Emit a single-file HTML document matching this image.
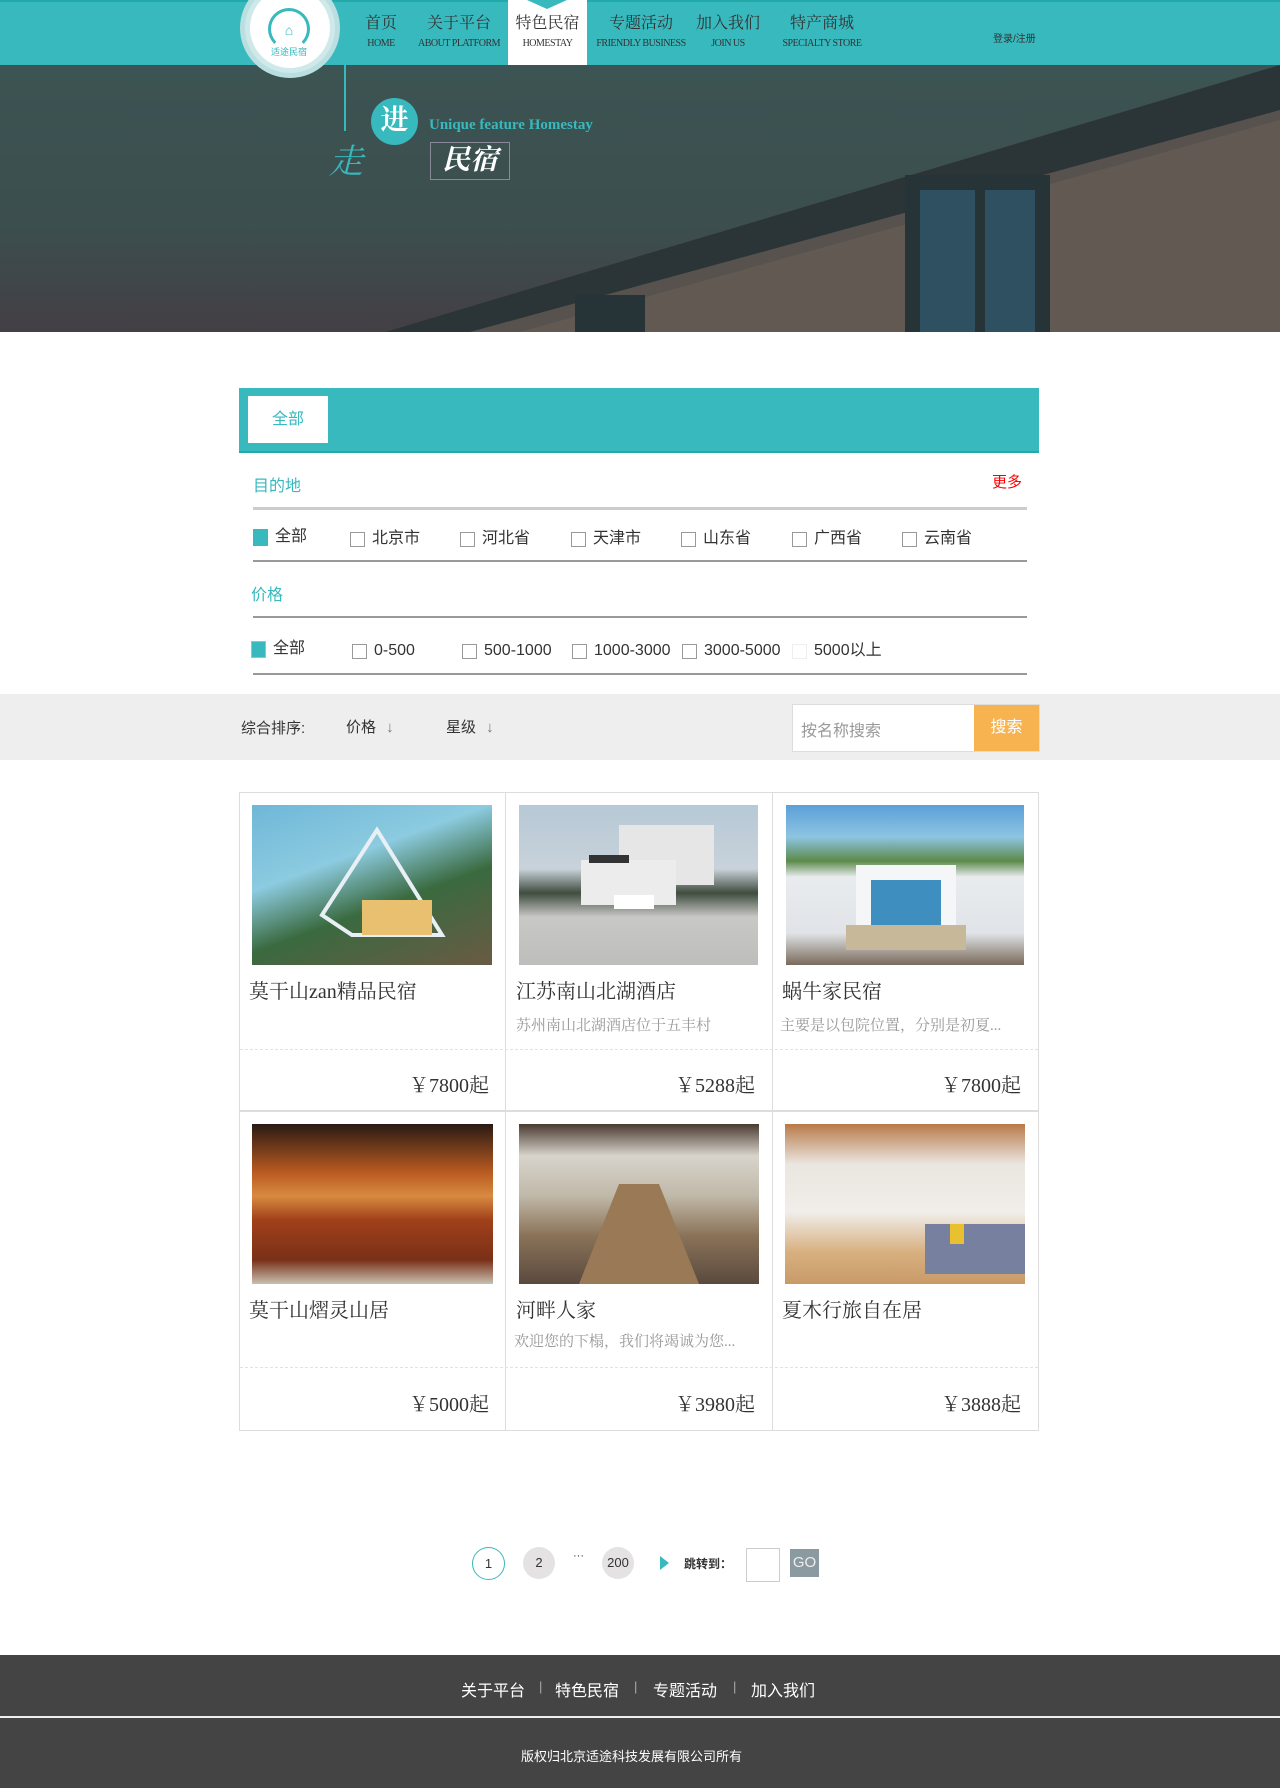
<!DOCTYPE html>
<html><head><meta charset="utf-8"><style>
*{margin:0;padding:0;box-sizing:border-box}
body{width:1280px;height:1788px;position:relative;background:#fff;font-family:"Liberation Serif","Noto Serif CJK SC",serif;overflow:hidden;color:#333}
.a{position:absolute}
.sans{font-family:"Liberation Sans","Noto Sans CJK SC",sans-serif}
.nav{left:0;top:0;width:1280px;height:65px;background:#37b9be;border-top:2px solid #2aa}
.ni{top:0;height:65px;text-align:center;color:#333}
.ni b{display:block;font-weight:normal;font-size:16px;margin-top:14px;line-height:20px}
.ni i{display:block;font-style:normal;font-size:10px;letter-spacing:-0.5px;margin-top:4px;font-family:"Liberation Serif",serif}
.chk{width:15px;height:15px;border:1px solid #999;display:inline-block;margin-right:7px;flex:none}
.fi{display:flex;align-items:center;height:20px;font-size:16px;line-height:20px}
.line{left:253px;width:774px;height:2px;background:#999}
.card{border:1px solid #ddd;background:#fff}
.ttl{font-size:20px;color:#333}
.desc{font-size:15px;color:#999}
.price{font-size:20px;color:#333;text-align:right}
.dash{height:0;border-top:1px dashed #e2e2e2}
.ft{top:1677px;font-size:16px;color:#fff}
</style></head><body>
<!-- banner -->
<div class="a" style="left:0;top:65px;width:1280px;height:267px;background:linear-gradient(180deg,#3c5453 0%,#3c4e4e 60%,#433f45 100%)"></div>
<svg class="a" style="left:0;top:65px" width="1280" height="267">
<polygon points="385,267 1280,0 1280,267" fill="#57524e"/>
<polygon points="385,267 1280,0 1280,45 470,267" fill="#2b3437"/>
<polygon points="520,267 1280,55 1280,267" fill="#625a52"/>
<rect x="905" y="110" width="145" height="170" fill="#263438"/>
<rect x="920" y="125" width="55" height="150" fill="#2e5060"/>
<rect x="985" y="125" width="50" height="150" fill="#2e5060"/>
<rect x="575" y="230" width="70" height="50" fill="#263438"/>
</svg>
<!-- nav -->
<div class="a nav"></div>
<div class="a" style="left:240px;top:-22px;width:100px;height:100px;border-radius:50%;background:#cfe9ea;border:5px solid #b9dfe0"></div>
<div class="a" style="left:250px;top:-12px;width:80px;height:80px;border-radius:50%;background:#fff"></div>
<div class="a" style="left:268px;top:8px;width:42px;height:42px;border-radius:50%;border:3px solid #37b9be;border-bottom-color:transparent"></div>
<div class="a sans" style="left:264px;top:22px;width:50px;text-align:center;color:#37b9be;font-size:14px">⌂</div>
<div class="a sans" style="left:262px;top:45px;width:54px;text-align:center;color:#37b9be;font-size:9px">适途民宿</div>
<div class="a ni" style="left:360px;width:42px"><b>首页</b><i>HOME</i></div>
<div class="a ni" style="left:413px;width:92px"><b>关于平台</b><i>ABOUT PLATFORM</i></div>
<div class="a" style="left:508px;top:0;width:79px;height:65px;background:#fff"></div>
<div class="a" style="left:527px;top:0;width:0;height:0;border-left:20px solid transparent;border-right:20px solid transparent;border-top:9px solid #37b9be"></div>
<div class="a ni" style="left:508px;width:79px"><b>特色民宿</b><i>HOMESTAY</i></div>
<div class="a ni" style="left:591px;width:100px"><b>专题活动</b><i>FRIENDLY BUSINESS</i></div>
<div class="a ni" style="left:693px;width:70px"><b>加入我们</b><i>JOIN US</i></div>
<div class="a ni" style="left:778px;width:88px"><b>特产商城</b><i>SPECIALTY STORE</i></div>
<div class="a sans" style="left:993px;top:30px;font-size:10px;color:#333">登录/注册</div>
<!-- banner text -->
<div class="a" style="left:344px;top:65px;width:2px;height:66px;background:#37b9be"></div>
<div class="a" style="left:329px;top:134px;font-size:34px;color:#37b9be;font-style:italic">走</div>
<div class="a" style="left:371px;top:98px;width:47px;height:47px;border-radius:50%;background:#37b9be;color:#fff;font-size:28px;text-align:center;line-height:46px;font-weight:bold">进</div>
<div class="a" style="left:429px;top:117px;font-size:15px;color:#37b9be;font-weight:bold">Unique feature Homestay</div>
<div class="a" style="left:430px;top:142px;width:80px;height:38px;border:1px solid #889;color:#fff;font-size:28px;line-height:36px;text-align:center;font-weight:bold;font-style:italic">民宿</div>
<!-- filter -->
<div class="a" style="left:239px;top:388px;width:800px;height:65px;background:#37b9be;border-bottom:2px solid #2aa"></div>
<div class="a sans" style="left:248px;top:396px;width:80px;height:47px;background:#fff;color:#37b9be;font-size:16px;text-align:center;line-height:47px">全部</div>
<div class="a sans" style="left:253px;top:472px;font-size:16px;color:#37b9be">目的地</div>
<div class="a sans" style="left:992px;top:471px;font-size:15px;color:#f00">更多</div>
<div class="a line" style="top:507px;background:#ccc;height:3px"></div>
<div class="a sans fi" style="left:253px;top:527px"><span class="chk" style="background:#37b9be;border-color:#37b9be;height:17px"></span>全部</div>
<div class="a sans fi" style="left:350px;top:529px"><span class="chk"></span>北京市</div>
<div class="a sans fi" style="left:460px;top:529px"><span class="chk"></span>河北省</div>
<div class="a sans fi" style="left:571px;top:529px"><span class="chk"></span>天津市</div>
<div class="a sans fi" style="left:681px;top:529px"><span class="chk"></span>山东省</div>
<div class="a sans fi" style="left:792px;top:529px"><span class="chk"></span>广西省</div>
<div class="a sans fi" style="left:902px;top:529px"><span class="chk"></span>云南省</div>
<div class="a line" style="top:560px"></div>
<div class="a sans" style="left:251px;top:581px;font-size:16px;color:#37b9be">价格</div>
<div class="a line" style="top:616px"></div>
<div class="a sans fi" style="left:251px;top:639px"><span class="chk" style="background:#37b9be;border-color:#e8a0a0;height:17px"></span>全部</div>
<div class="a sans fi" style="left:352px;top:641px"><span class="chk"></span>0-500</div>
<div class="a sans fi" style="left:462px;top:641px"><span class="chk"></span>500-1000</div>
<div class="a sans fi" style="left:572px;top:641px"><span class="chk"></span>1000-3000</div>
<div class="a sans fi" style="left:682px;top:641px"><span class="chk"></span>3000-5000</div>
<div class="a sans fi" style="left:792px;top:641px"><span class="chk" style="border-color:#eee"></span>5000以上</div>
<div class="a line" style="top:673px"></div>
<!-- sort bar -->
<div class="a" style="left:0;top:694px;width:1280px;height:66px;background:#eee"></div>
<div class="a sans" style="left:241px;top:717px;font-size:15px">综合排序:</div>
<div class="a sans" style="left:346px;top:716px;font-size:15px">价格 <span style="color:#777;margin-left:6px">↓</span></div>
<div class="a sans" style="left:446px;top:716px;font-size:15px">星级 <span style="color:#777;margin-left:6px">↓</span></div>
<div class="a" style="left:792px;top:704px;width:248px;height:48px;border:1px solid #ddd;background:#fff"></div>
<div class="a sans" style="left:801px;top:717px;font-size:16px;color:#999">按名称搜索</div>
<div class="a sans" style="left:974px;top:705px;width:65px;height:46px;background:#f6b350;color:#fff;font-size:16px;text-align:center;line-height:46px">搜索</div>
<!-- cards -->
<div class="a card" style="left:239px;top:792px;width:800px;height:639px"></div>
<div class="a" style="left:505px;top:792px;width:1px;height:639px;background:#ddd"></div>
<div class="a" style="left:772px;top:792px;width:1px;height:639px;background:#ddd"></div>
<div class="a" style="left:239px;top:1110px;width:800px;height:2px;background:#ddd"></div>

<div class="a" style="left:252px;top:805px;width:240px;height:160px;background:linear-gradient(160deg,#6fb7d8 0%,#8ccbe0 35%,#3a6a3f 60%,#6a5a44 100%)"><svg width="240" height="160"><polygon points="70,110 125,25 190,130 100,130" fill="none" stroke="#e8f0f6" stroke-width="4"/><rect x="110" y="95" width="70" height="35" fill="#e8c070"/></svg></div>
<div class="a" style="left:519px;top:805px;width:239px;height:160px;background:linear-gradient(180deg,#b6c9d6 0%,#c8d2da 40%,#3f4c3e 55%,#c8c8c6 70%,#bdbdbb 100%)"><svg width="239" height="160"><rect x="100" y="20" width="95" height="60" fill="#e6e6e6"/><rect x="62" y="55" width="95" height="45" fill="#ececec"/><rect x="70" y="50" width="40" height="8" fill="#333"/><rect x="95" y="90" width="40" height="14" fill="#fff"/></svg></div>
<div class="a" style="left:786px;top:805px;width:238px;height:160px;background:linear-gradient(180deg,#5aa0d8 0%,#8ec4e2 20%,#5c8a4a 35%,#e8ecef 45%,#e0e4e8 80%,#7a6a5a 100%)"><svg width="238" height="160"><rect x="70" y="60" width="100" height="80" fill="#f4f6f8"/><rect x="85" y="75" width="70" height="50" fill="#3e8fc0"/><rect x="60" y="120" width="120" height="25" fill="#c8b89a"/></svg></div>

<div class="a ttl" style="left:249px;top:975px">莫干山zan精品民宿</div>
<div class="a ttl" style="left:516px;top:975px">江苏南山北湖酒店</div>
<div class="a desc" style="left:516px;top:1014px">苏州南山北湖酒店位于五丰村</div>
<div class="a ttl" style="left:782px;top:975px">蜗牛家民宿</div>
<div class="a desc" style="left:780px;top:1014px">主要是以包院位置，分别是初夏...</div>
<div class="a dash" style="left:240px;top:1049px;width:798px"></div>
<div class="a price" style="left:300px;top:1069px;width:189px">￥7800起</div>
<div class="a price" style="left:566px;top:1069px;width:189px">￥5288起</div>
<div class="a price" style="left:832px;top:1069px;width:189px">￥7800起</div>

<div class="a" style="left:252px;top:1124px;width:241px;height:160px;background:linear-gradient(180deg,#2a1a14 0%,#b85a20 30%,#d88a40 45%,#a0401a 60%,#7a3018 85%,#c8c0b0 100%)"></div>
<div class="a" style="left:519px;top:1124px;width:240px;height:160px;background:linear-gradient(180deg,#4a3a30 0%,#d8d4cc 20%,#c0b8a8 45%,#8a7258 70%,#5a4a3e 100%)"><svg width="240" height="160"><polygon points="100,60 140,60 180,160 60,160" fill="#9a7a56"/></svg></div>
<div class="a" style="left:785px;top:1124px;width:240px;height:160px;background:linear-gradient(180deg,#b87a48 0%,#eae6e0 25%,#f0eeea 55%,#d8b080 80%,#c89a68 100%)"><svg width="240" height="160"><rect x="140" y="100" width="100" height="50" fill="#7880a0"/><rect x="165" y="100" width="14" height="20" fill="#e8c030"/></svg></div>

<div class="a ttl" style="left:249px;top:1294px">莫干山熠灵山居</div>
<div class="a ttl" style="left:516px;top:1294px">河畔人家</div>
<div class="a desc" style="left:514px;top:1330px">欢迎您的下榻，我们将竭诚为您...</div>
<div class="a ttl" style="left:782px;top:1294px">夏木行旅自在居</div>
<div class="a dash" style="left:240px;top:1367px;width:798px"></div>
<div class="a price" style="left:300px;top:1388px;width:189px">￥5000起</div>
<div class="a price" style="left:566px;top:1388px;width:189px">￥3980起</div>
<div class="a price" style="left:832px;top:1388px;width:189px">￥3888起</div>
<!-- pagination -->
<div class="a sans" style="left:472px;top:1547px;width:33px;height:33px;border:1px solid #37b9be;border-radius:50%;text-align:center;line-height:31px;font-size:13px">1</div>
<div class="a sans" style="left:523px;top:1547px;width:32px;height:32px;background:#e4e2e2;border-radius:50%;text-align:center;line-height:32px;font-size:13px">2</div>
<div class="a sans" style="left:573px;top:1550px;font-size:11px">···</div>
<div class="a sans" style="left:602px;top:1547px;width:32px;height:32px;background:#e4e2e2;border-radius:50%;text-align:center;line-height:32px;font-size:13px">200</div>
<div class="a" style="left:660px;top:1556px;width:0;height:0;border-top:7px solid transparent;border-bottom:7px solid transparent;border-left:9px solid #37b9be"></div>
<div class="a sans" style="left:684px;top:1555px;font-size:12px;font-weight:bold">跳转到：</div>
<div class="a" style="left:746px;top:1548px;width:34px;height:34px;border:1px solid #ccc"></div>
<div class="a sans" style="left:790px;top:1549px;width:29px;height:28px;background:#8a9aa0;color:#eee;font-size:15px;text-align:center;line-height:28px">GO</div>
<!-- footer -->
<div class="a" style="left:0;top:1655px;width:1280px;height:133px;background:#444"></div>
<div class="a" style="left:0;top:1716px;width:1280px;height:2px;background:#eee"></div>
<div class="a sans ft" style="left:461px">关于平台</div>
<div class="a sans ft" style="left:539px;color:#aaa;font-size:13px;top:1679px">|</div>
<div class="a sans ft" style="left:555px">特色民宿</div>
<div class="a sans ft" style="left:634px;color:#aaa;font-size:13px;top:1679px">|</div>
<div class="a sans ft" style="left:653px">专题活动</div>
<div class="a sans ft" style="left:733px;color:#aaa;font-size:13px;top:1679px">|</div>
<div class="a sans ft" style="left:751px">加入我们</div>
<div class="a sans" style="left:521px;top:1746px;font-size:13px;color:#fff">版权归北京适途科技发展有限公司所有</div>
</body></html>
